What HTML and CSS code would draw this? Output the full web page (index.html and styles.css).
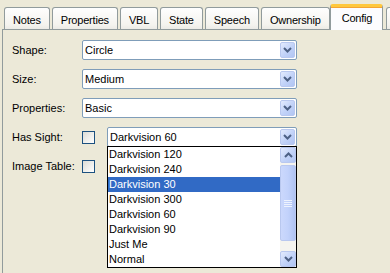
FILE: index.html
```html
<!DOCTYPE html>
<html lang="en">
<head>
    <meta charset="UTF-8">
    <meta name="viewport" content="width=device-width, initial-scale=1.0">
    <title>Token Config</title>
    <link rel="stylesheet" href="styles.css">
</head>
<body>
    <div class="tab-strip">
        <div class="tab">Notes</div>
        <div class="tab">Properties</div>
        <div class="tab">VBL</div>
        <div class="tab">State</div>
        <div class="tab">Speech</div>
        <div class="tab">Ownership</div>
        <div class="tab selected">Config</div>
        <div class="tab more"></div>
    </div>
    <div class="panel">
        <div class="form">
            <div class="row">
                <span class="label">Shape:</span>
                <div class="combo">
                    <span class="value">Circle</span>
                    <span class="arrow"><svg width="9" height="6" viewBox="0 0 9 6"><polyline points="1,1 4.5,4.5 8,1" fill="none" stroke="#4d6185" stroke-width="2"/></svg></span>
                </div>
            </div>
            <div class="row">
                <span class="label">Size:</span>
                <div class="combo">
                    <span class="value">Medium</span>
                    <span class="arrow"><svg width="9" height="6" viewBox="0 0 9 6"><polyline points="1,1 4.5,4.5 8,1" fill="none" stroke="#4d6185" stroke-width="2"/></svg></span>
                </div>
            </div>
            <div class="row">
                <span class="label">Properties:</span>
                <div class="combo">
                    <span class="value">Basic</span>
                    <span class="arrow"><svg width="9" height="6" viewBox="0 0 9 6"><polyline points="1,1 4.5,4.5 8,1" fill="none" stroke="#4d6185" stroke-width="2"/></svg></span>
                </div>
            </div>
            <div class="row">
                <span class="label">Has Sight:</span>
                <span class="check"></span>
                <div class="combo short">
                    <span class="value">Darkvision 60</span>
                    <span class="arrow"><svg width="9" height="6" viewBox="0 0 9 6"><polyline points="1,1 4.5,4.5 8,1" fill="none" stroke="#4d6185" stroke-width="2"/></svg></span>
                    <div class="popup">
                        <ul class="list">
                            <li>Darkvision 120</li>
                            <li>Darkvision 240</li>
                            <li class="current">Darkvision 30</li>
                            <li>Darkvision 300</li>
                            <li>Darkvision 60</li>
                            <li>Darkvision 90</li>
                            <li>Just Me</li>
                            <li>Normal</li>
                        </ul>
                        <div class="scrollbar">
                            <span class="sb-btn"><svg width="9" height="6" viewBox="0 0 9 6"><polyline points="1,5 4.5,1.5 8,5" fill="none" stroke="#4d6185" stroke-width="2"/></svg></span>
                            <span class="sb-thumb"><span class="grip"></span></span>
                            <span class="sb-btn down"><svg width="9" height="6" viewBox="0 0 9 6"><polyline points="1,1 4.5,4.5 8,1" fill="none" stroke="#4d6185" stroke-width="2"/></svg></span>
                        </div>
                    </div>
                </div>
            </div>
            <div class="row">
                <span class="label">Image Table:</span>
                <span class="check"></span>
            </div>
        </div>
    </div>
</body>
</html>
```

FILE: styles.css
```css
body, html {
    margin: 0;
    height: 100%;
    overflow: hidden;
    background-color: #ece9d8;
    font-family: 'Liberation Sans', Arial, sans-serif;
    font-size: 11px;
    color: #000;
}
.tab-strip {
    display: flex;
    align-items: flex-end;
    height: 24px;
    padding: 5px 0 0 4px;
    gap: 2px;
    white-space: nowrap;
}
.tab {
    position: relative;
    height: 22px;
    box-sizing: border-box;
    padding: 6px 8px 0 8px;
    letter-spacing: -0.2px;
    border: 1px solid #919b9c;
    border-bottom: none;
    border-radius: 3px 3px 0 0;
    background: linear-gradient(#fefefe, #f4f3ee 80%, #ecebe6);
}
.tab.selected {
    height: 26px;
    margin: 0 0 -1px -2px;
    padding: 5px 10px 0 11px;
    z-index: 2;
    background: #fcfcfe;
    border-top: 3px solid #ffc83c;
    box-shadow: inset 0 1px 0 #f4a432;
}
.tab.selected + .tab {
    margin-left: 1px;
}
.tab.more {
    width: 30px;
    flex-shrink: 0;
}
.panel {
    margin-left: 2px;
    width: 420px;
    height: 260px;
    border-top: 1px solid #919b9c;
    border-left: 1px solid #919b9c;
    background-color: #ece9d8;
}
.form {
    display: flex;
    flex-direction: column;
    gap: 9px;
    padding: 10px 0 0 9px;
}
.row {
    display: flex;
    align-items: center;
    height: 20px;
}
.label {
    width: 70px;
}
.combo {
    position: relative;
    display: flex;
    align-items: center;
    width: 215px;
    height: 20px;
    box-sizing: border-box;
    border: 1px solid #7f9db9;
    border-radius: 2px;
    background: #fff;
}
.combo.short {
    width: 190px;
}
.value {
    flex: 1;
    padding-left: 2px;
}
.arrow, .sb-btn {
    display: flex;
    align-items: center;
    justify-content: center;
    width: 15px;
    height: 16px;
    box-sizing: border-box;
    margin-right: 1px;
    border: 1px solid #b9c8ef;
    border-radius: 2px;
    background: linear-gradient(135deg, #e3ebfe, #c1d2f8 55%, #b1c5f3);
}
.check {
    width: 13px;
    height: 13px;
    box-sizing: border-box;
    margin-right: 12px;
    border: 1px solid #1c5180;
    background: linear-gradient(135deg, #dcdcd6, #fff);
}
.popup {
    position: absolute;
    left: -1px;
    top: 18px;
    z-index: 5;
    display: flex;
    width: 190px;
    height: 122px;
    box-sizing: border-box;
    border: 1px solid #000;
    background: #fff;
}
.list {
    flex: 1;
    margin: 0;
    padding: 0;
    list-style: none;
}
.list li {
    height: 15px;
    line-height: 15px;
    padding-left: 1px;
}
.list li.current {
    background-color: #316ac5;
    color: #fff;
}
.scrollbar {
    display: flex;
    flex-direction: column;
    width: 16px;
    background: #f5f4ef;
}
.sb-btn {
    width: 16px;
    height: 16px;
    margin: 0;
}
.sb-thumb {
    display: flex;
    align-items: center;
    justify-content: center;
    height: 76px;
    margin-top: 2px;
    box-sizing: border-box;
    border: 1px solid #b9c8ef;
    border-radius: 2px;
    background: linear-gradient(90deg, #cbd8fc, #c2d2fb 50%, #b0c3f2);
}
.grip {
    width: 8px;
    height: 7px;
    background: repeating-linear-gradient(#eef3fe 0 1px, transparent 1px 2px);
}
.sb-btn.down {
    margin-top: auto;
}
```
